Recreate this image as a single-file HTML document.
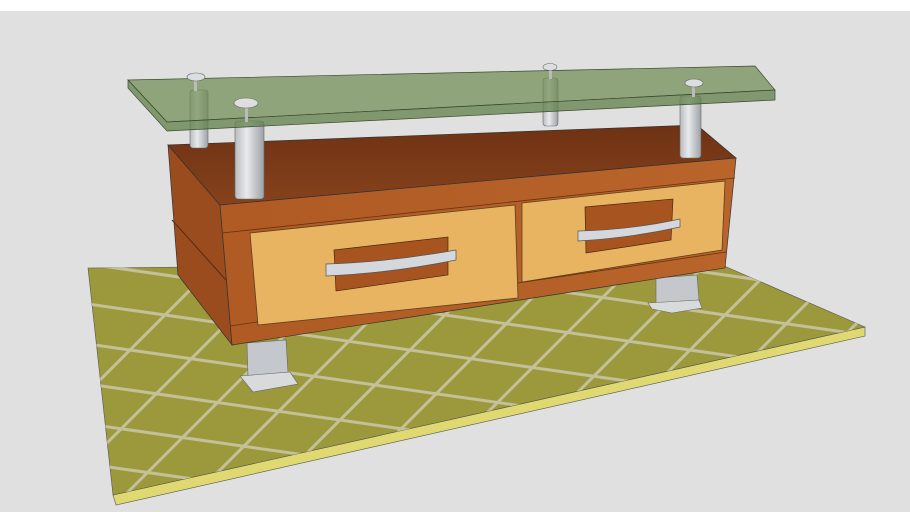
<!DOCTYPE html>
<html><head><style>
html,body{margin:0;padding:0;width:910px;height:512px;overflow:hidden;background:#e0e0e0;}
svg{display:block;}
</style></head><body>
<svg width="910" height="512" viewBox="0 0 910 512" xmlns="http://www.w3.org/2000/svg">
<defs>
<clipPath id="rug"><polygon points="88,268 715,262 865,327 113,495"/></clipPath>
<linearGradient id="top" x1="0" y1="0" x2="0" y2="1"><stop offset="0" stop-color="#6e3214"/><stop offset="1" stop-color="#86421c"/></linearGradient>
<linearGradient id="front" x1="0" y1="0" x2="1" y2="0"><stop offset="0" stop-color="#b05a24"/><stop offset="1" stop-color="#b8642a"/></linearGradient>
<linearGradient id="cyl" x1="0" y1="0" x2="1" y2="0"><stop offset="0" stop-color="#b8bcc0"/><stop offset="0.4" stop-color="#e8eaec"/><stop offset="1" stop-color="#9ea2a6"/></linearGradient>
</defs>
<rect x="0" y="0" width="910" height="11" fill="#ffffff"/>
<rect x="0" y="11" width="910" height="501" fill="#e0e0e0"/>
<!-- rug -->
<polygon points="113,495 865,327 865,336 116,505" fill="#e0d870" stroke="#555" stroke-width="0.6"/>
<polygon points="88,268 715,262 865,327 113,495" fill="#9c983c" stroke="#555" stroke-width="0.6"/>
<g clip-path="url(#rug)" stroke="#c4c09a" stroke-width="3" fill="none">
<path d="M60,300 L900,420 M60,260 L900,380 M60,220 L900,340 M60,180 L900,300 M60,340 L900,460 M60,380 L900,500 M60,420 L900,540 M60,460 L900,580 M60,140 L900,260 M60,100 L900,220"/>
<path d="M100,520 L380,240 M170,520 L450,240 M240,520 L520,240 M310,520 L590,240 M380,520 L660,240 M450,520 L730,240 M520,520 L800,240 M590,520 L870,240 M660,520 L940,240 M730,520 L1010,240 M30,520 L310,240 M-40,520 L240,240 M800,520 L1080,240"/>
</g>
<polygon points="196,283 204,283 206,297 198,297" fill="#c8cacc"/>
<!-- legs -->
<polygon points="656,278 697,275 699,300 656,303" fill="#c4c8cc" stroke="#666" stroke-width="0.6"/>
<polygon points="648,303 699,300 702,308 672,313 652,309" fill="#d8dadc" stroke="#666" stroke-width="0.6"/>
<polygon points="247,343 286,340 288,373 248,376" fill="#c4c8cc" stroke="#666" stroke-width="0.6"/>
<polygon points="240,376 290,372 298,384 253,392" fill="#d8dadc" stroke="#666" stroke-width="0.6"/>
<!-- table body -->
<polygon points="168,145 220,205 232,345 178,275" fill="#9a4c1e" stroke="#333" stroke-width="0.7"/>
<polyline points="172,220 226,280" stroke="#5a2a10" stroke-width="1" fill="none"/>
<polygon points="168,145 697,125 736,158 220,205" fill="url(#top)" stroke="#333" stroke-width="0.7"/>
<polygon points="220,205 736,158 725,268 232,345" fill="url(#front)" stroke="#333" stroke-width="0.7"/>
<line x1="222" y1="233" x2="735" y2="178" stroke="#6a3010" stroke-width="0.8"/>
<line x1="230" y1="326" x2="726" y2="252" stroke="#6a3010" stroke-width="0.8"/>
<!-- drawers -->
<polygon points="250,233 515,205 518,298 258,325" fill="#e8b462" stroke="#5a4020" stroke-width="0.8"/>
<polygon points="522,203 725,181 722,250 522,282" fill="#e8b462" stroke="#5a4020" stroke-width="0.8"/>
<polygon points="334,250 448,237 448,275 336,291" fill="#a85420" stroke="#4a2a10" stroke-width="0.7"/>
<polygon points="585,207 673,199 671,240 586,253" fill="#a85420" stroke="#4a2a10" stroke-width="0.7"/>
<path d="M326,264 Q390,262 456,250 L456,260 Q392,273 326,276 Z" fill="#d4d8dc" stroke="#555" stroke-width="0.7"/>
<path d="M578,231 Q630,230 680,219 L680,227 Q630,238 578,241 Z" fill="#d4d8dc" stroke="#555" stroke-width="0.7"/>
<!-- posts -->
<rect x="190" y="90" width="18" height="58" rx="3" fill="url(#cyl)" stroke="#666" stroke-width="0.6"/>
<rect x="543" y="78" width="15" height="48" rx="3" fill="url(#cyl)" stroke="#666" stroke-width="0.6"/>
<rect x="680" y="96" width="21" height="62" rx="3" fill="url(#cyl)" stroke="#666" stroke-width="0.6"/>
<rect x="235" y="121" width="29" height="78" rx="3" fill="url(#cyl)" stroke="#666" stroke-width="0.6"/>
<!-- glass -->
<polygon points="128,80 755,66 775,90 167,122" fill="#6e8a50" fill-opacity="0.7" stroke="#3a4a30" stroke-width="0.7"/>
<polygon points="128,80 167,122 775,90 775,100 167,131 128,88" fill="#62804a" fill-opacity="0.75" stroke="#3a4a30" stroke-width="0.7"/>
<!-- caps -->
<rect x="194" y="77" width="3" height="14" fill="#bbb"/>
<ellipse cx="196" cy="77" rx="9" ry="4" fill="#dcdee0" stroke="#666" stroke-width="0.6"/>
<rect x="549" y="67" width="3" height="12" fill="#bbb"/>
<ellipse cx="550" cy="67" rx="7" ry="3.5" fill="#dcdee0" stroke="#666" stroke-width="0.6"/>
<rect x="692" y="83" width="3" height="14" fill="#bbb"/>
<ellipse cx="694" cy="83" rx="9" ry="4" fill="#dcdee0" stroke="#666" stroke-width="0.6"/>
<rect x="245" y="104" width="3" height="18" fill="#bbb"/>
<ellipse cx="246" cy="103" rx="12" ry="5" fill="#dcdee0" stroke="#666" stroke-width="0.6"/>
</svg>
</body></html>
